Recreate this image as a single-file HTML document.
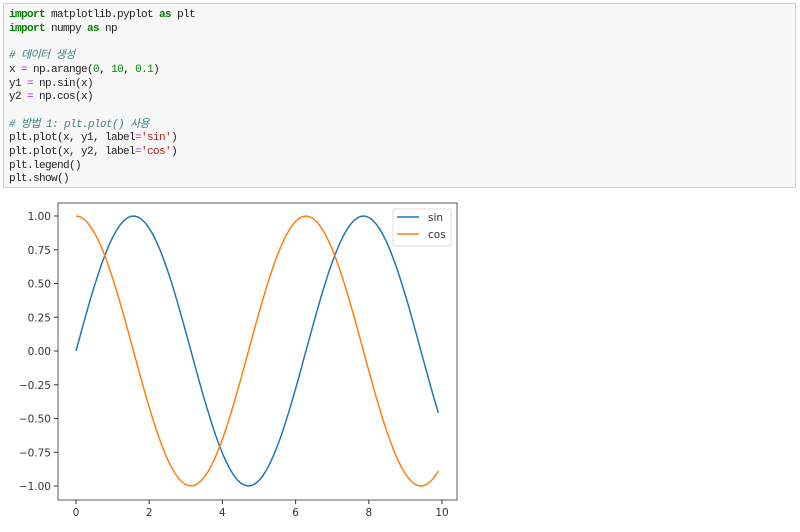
<!DOCTYPE html>
<html><head><meta charset="utf-8"><style>
body{margin:0;width:800px;height:532px;background:#fff;overflow:hidden;font-family:"Liberation Mono","Noto Sans CJK KR",monospace;}
.cell{position:absolute;left:3px;top:3px;width:793px;height:185px;background:#f7f7f7;border:1px solid #cfcfcf;box-sizing:border-box;}
pre{margin:0;position:absolute;left:5px;top:5px;font-size:11px;letter-spacing:-0.6px;line-height:13.7px;color:#222;font-family:"Liberation Mono","Noto Sans CJK KR",monospace;}
.k{color:#008000;font-weight:bold}.c{color:#408080;font-style:italic}.n{color:#080}.s{color:#ba2121}.o{color:#a2f}
</style></head><body>
<div class="cell"><pre><span class="k">import</span> matplotlib.pyplot <span class="k">as</span> plt
<span class="k">import</span> numpy <span class="k">as</span> np

<span class="c"># 데이터 생성</span>
x <span class="o">=</span> np.arange(<span class="n">0</span>, <span class="n">10</span>, <span class="n">0.1</span>)
y1 <span class="o">=</span> np.sin(x)
y2 <span class="o">=</span> np.cos(x)

<span class="c"># 방법 1: plt.plot() 사용</span>
plt.plot(x, y1, label<span class="o">=</span><span class="s">'sin'</span>)
plt.plot(x, y2, label<span class="o">=</span><span class="s">'cos'</span>)
plt.legend()
plt.show()</pre></div>
<svg id="g" width="800" height="532" style="position:absolute;left:0;top:0" font-family="DejaVu Sans, sans-serif" font-size="10.5" fill="#333">
</svg>
<script>
var g=document.getElementById('g'),h='';
function X(v){return 76+v*36.6}function Y(v){return 351-v*135}
var s='',c='';
for(var i=0;i<100;i++){var x=i*0.1;s+=(i?'L':'M')+X(x).toFixed(1)+' '+Y(Math.sin(x)).toFixed(1);c+=(i?'L':'M')+X(x).toFixed(1)+' '+Y(Math.cos(x)).toFixed(1);}
h+='<rect x="58" y="203" width="399" height="297" fill="none" stroke="#333" stroke-width="0.8"/>';
h+='<path d="'+s+'" fill="none" stroke="#1f77b4" stroke-width="1.5"/>';
h+='<path d="'+c+'" fill="none" stroke="#ff7f0e" stroke-width="1.5"/>';
for(var t=0;t<=10;t+=2){h+='<line x1="'+X(t)+'" x2="'+X(t)+'" y1="500" y2="504" stroke="#333"/><text x="'+X(t)+'" y="516" text-anchor="middle">'+t+'</text>';}
for(var k=-4;k<=4;k++){var v=k*0.25,y=Y(v);h+='<line x1="54" x2="58" y1="'+y+'" y2="'+y+'" stroke="#333"/><text x="51" y="'+(y+4)+'" text-anchor="end">'+(v<0?'\u2212':'')+Math.abs(v).toFixed(2)+'</text>';}
h+='<rect x="393" y="209" width="58" height="37" rx="2" fill="#fff" stroke="#ddd"/>';
h+='<line x1="397" x2="419" y1="217" y2="217" stroke="#1f77b4" stroke-width="1.5"/><text x="428" y="221">sin</text>';
h+='<line x1="397" x2="419" y1="234" y2="234" stroke="#ff7f0e" stroke-width="1.5"/><text x="428" y="238">cos</text>';
g.innerHTML=h;
</script>
</body></html>
